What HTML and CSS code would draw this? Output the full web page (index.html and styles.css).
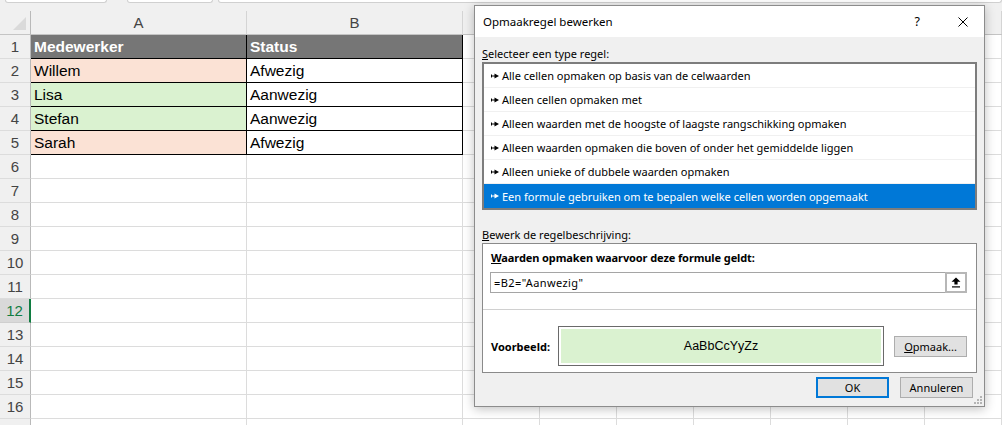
FILE: index.html
```html
<!DOCTYPE html>
<html lang="nl">
<head>
    <meta charset="UTF-8">
    <title>Opmaakregel bewerken</title>
    <link rel="stylesheet" href="styles.css">
</head>
<body>
    <div class="toolbar">
        <div class="tb-box name-box"></div>
        <div class="tb-box fx-box"></div>
        <div class="tb-box formula-box"></div>
    </div>

    <div class="sheet">
        <div class="row col-heads">
            <div class="rh corner"></div>
            <div class="ch">A</div>
            <div class="ch">B</div>
            <div class="rest"></div>
        </div>
        <div class="row">
            <div class="rh">1</div>
            <div class="c tb head">Medewerker</div>
            <div class="c tb head">Status</div>
            <div class="rest"></div>
        </div>
        <div class="row">
            <div class="rh">2</div>
            <div class="c tb peach">Willem</div>
            <div class="c tb">Afwezig</div>
            <div class="rest"></div>
        </div>
        <div class="row">
            <div class="rh">3</div>
            <div class="c tb green">Lisa</div>
            <div class="c tb">Aanwezig</div>
            <div class="rest"></div>
        </div>
        <div class="row">
            <div class="rh">4</div>
            <div class="c tb green">Stefan</div>
            <div class="c tb">Aanwezig</div>
            <div class="rest"></div>
        </div>
        <div class="row">
            <div class="rh">5</div>
            <div class="c tb peach">Sarah</div>
            <div class="c tb">Afwezig</div>
            <div class="rest"></div>
        </div>
        <div class="row"><div class="rh">6</div><div class="c"></div><div class="c"></div><div class="rest"></div></div>
        <div class="row"><div class="rh">7</div><div class="c"></div><div class="c"></div><div class="rest"></div></div>
        <div class="row"><div class="rh">8</div><div class="c"></div><div class="c"></div><div class="rest"></div></div>
        <div class="row"><div class="rh">9</div><div class="c"></div><div class="c"></div><div class="rest"></div></div>
        <div class="row"><div class="rh">10</div><div class="c"></div><div class="c"></div><div class="rest"></div></div>
        <div class="row"><div class="rh">11</div><div class="c"></div><div class="c"></div><div class="rest"></div></div>
        <div class="row"><div class="rh active">12</div><div class="c"></div><div class="c"></div><div class="rest"></div></div>
        <div class="row"><div class="rh">13</div><div class="c"></div><div class="c"></div><div class="rest"></div></div>
        <div class="row"><div class="rh">14</div><div class="c"></div><div class="c"></div><div class="rest"></div></div>
        <div class="row"><div class="rh">15</div><div class="c"></div><div class="c"></div><div class="rest"></div></div>
        <div class="row"><div class="rh">16</div><div class="c"></div><div class="c"></div><div class="rest"></div></div>
        <div class="row"><div class="rh"></div><div class="c"></div><div class="c"></div><div class="rest"></div></div>
    </div>

    <div class="dialog">
        <div class="dlg-title">
            <span class="dlg-name">Opmaakregel bewerken</span>
            <span class="help">?</span>
            <svg class="close" width="10" height="10" viewBox="0 0 10 10"><path d="M0.5 0.5L9.5 9.5M9.5 0.5L0.5 9.5" stroke="#000" stroke-width="1"/></svg>
        </div>

        <div class="dlg-body">
            <div class="lbl"><u>S</u>electeer een type regel:</div>
            <div class="rule-list">
                <div class="rule"><svg class="arr" width="8" height="6" viewBox="0 0 8 6"><path d="M0.5 1.5V4.5M0 3H4" stroke="currentColor"/><path d="M3.5 0.5L8 3L3.5 5.5Z" fill="currentColor"/></svg>Alle cellen opmaken op basis van de celwaarden</div>
                <div class="rule"><svg class="arr" width="8" height="6" viewBox="0 0 8 6"><path d="M0.5 1.5V4.5M0 3H4" stroke="currentColor"/><path d="M3.5 0.5L8 3L3.5 5.5Z" fill="currentColor"/></svg>Alleen cellen opmaken met</div>
                <div class="rule"><svg class="arr" width="8" height="6" viewBox="0 0 8 6"><path d="M0.5 1.5V4.5M0 3H4" stroke="currentColor"/><path d="M3.5 0.5L8 3L3.5 5.5Z" fill="currentColor"/></svg>Alleen waarden met de hoogste of laagste rangschikking opmaken</div>
                <div class="rule"><svg class="arr" width="8" height="6" viewBox="0 0 8 6"><path d="M0.5 1.5V4.5M0 3H4" stroke="currentColor"/><path d="M3.5 0.5L8 3L3.5 5.5Z" fill="currentColor"/></svg>Alleen waarden opmaken die boven of onder het gemiddelde liggen</div>
                <div class="rule"><svg class="arr" width="8" height="6" viewBox="0 0 8 6"><path d="M0.5 1.5V4.5M0 3H4" stroke="currentColor"/><path d="M3.5 0.5L8 3L3.5 5.5Z" fill="currentColor"/></svg>Alleen unieke of dubbele waarden opmaken</div>
                <div class="rule selected"><svg class="arr" width="8" height="6" viewBox="0 0 8 6"><path d="M0.5 1.5V4.5M0 3H4" stroke="currentColor"/><path d="M3.5 0.5L8 3L3.5 5.5Z" fill="currentColor"/></svg>Een formule gebruiken om te bepalen welke cellen worden opgemaakt</div>
            </div>

            <div class="lbl lbl-desc"><u>B</u>ewerk de regelbeschrijving:</div>
            <div class="desc">
                <div class="desc-title"><u>W</u>aarden opmaken waarvoor deze formule geldt:</div>
                <div class="formula">
                    <span class="formula-text">=B2="Aanwezig"</span>
                    <span class="pick">
                        <svg width="10" height="11" viewBox="0 0 10 11"><path d="M5 0.5L9.5 4.8H6.6V7.5H3.4V4.8H0.5Z" fill="#000"/><rect x="1" y="9.3" width="8" height="1.2" fill="#000"/></svg>
                    </span>
                </div>
                <div class="sep"></div>
                <div class="preview-row">
                    <span class="preview-lbl">Voorbeeld:</span>
                    <div class="preview"><div class="preview-fill">AaBbCcYyZz</div></div>
                    <button class="btn"><u>O</u>pmaak...</button>
                </div>
            </div>

            <div class="dlg-foot">
                <button class="btn default">OK</button>
                <button class="btn">Annuleren</button>
            </div>
        </div>

        <svg class="grip" width="8" height="8" viewBox="0 0 8 8">
            <rect x="6" y="0" width="2" height="2" fill="#b4b4b4"/>
            <rect x="3" y="3" width="2" height="2" fill="#b4b4b4"/>
            <rect x="6" y="3" width="2" height="2" fill="#b4b4b4"/>
            <rect x="0" y="6" width="2" height="2" fill="#b4b4b4"/>
            <rect x="3" y="6" width="2" height="2" fill="#b4b4b4"/>
            <rect x="6" y="6" width="2" height="2" fill="#b4b4b4"/>
        </svg>
    </div>
</body>
</html>
```

FILE: styles.css
```css
:root {
    --grid-line: #dcdcdc;
    --head-bg: #f0f0f0;
    --head-text: #444444;
    --excel-green: #107c41;
    --select-blue: #0078d7;
}

body, html {
    margin: 0;
    padding: 0;
    overflow: hidden;
    background-color: #ffffff;
    height: 100%;
}

body {
    position: relative;
    font-family: "Liberation Sans", Arial, sans-serif;
}

/* Toolbar remnants at the top */
.toolbar {
    display: flex;
    height: 11px;
    background-color: var(--head-bg);
    padding-left: 5px;
    box-sizing: border-box;
}

.tb-box {
    height: 3px;
    background-color: #ffffff;
    border: 1px solid #d0d0d0;
    border-top: none;
    border-radius: 0 0 4px 4px;
    box-sizing: border-box;
}

.name-box {
    width: 102px;
}

.fx-box {
    width: 86px;
    margin-left: 20px;
}

.formula-box {
    flex: 1;
    margin-left: 5px;
}

/* Sheet */
.sheet {
    display: flex;
    flex-direction: column;
}

.row {
    display: flex;
    height: 24px;
}

.rh {
    width: 31px;
    flex: none;
    box-sizing: border-box;
    background-color: var(--head-bg);
    border-right: 1px solid #b9b9b9;
    border-bottom: 1px solid var(--grid-line);
    color: var(--head-text);
    font-size: 15px;
    line-height: 23px;
    text-align: center;
}

.rh.active {
    background-color: #d9d9d9;
    color: var(--excel-green);
    border-right: 2px solid var(--excel-green);
    border-bottom-color: #cfcfcf;
}

.corner {
    position: relative;
    border-bottom: 1px solid #c4c4c4;
}

.corner::after {
    content: "";
    position: absolute;
    right: 4px;
    bottom: 4px;
    border-style: solid;
    border-width: 0 0 13px 13px;
    border-color: transparent transparent #dadada transparent;
}

.ch {
    width: 216px;
    flex: none;
    box-sizing: border-box;
    background-color: var(--head-bg);
    border-right: 1px solid #d4d4d4;
    border-bottom: 1px solid #c4c4c4;
    color: var(--head-text);
    font-size: 15px;
    line-height: 24px;
    text-align: center;
}

.col-heads .rest {
    background-color: var(--head-bg);
    border-bottom-color: #c4c4c4;
    background-image: repeating-linear-gradient(to right, transparent 0 76px, #d4d4d4 76px 77px);
}

.c {
    width: 216px;
    flex: none;
    box-sizing: border-box;
    border-right: 1px solid var(--grid-line);
    border-bottom: 1px solid var(--grid-line);
    padding-left: 3px;
    font-size: 15.5px;
    line-height: 23px;
    color: #000000;
    white-space: nowrap;
}

.rest {
    flex: 1;
    box-sizing: border-box;
    border-bottom: 1px solid var(--grid-line);
    background-image: repeating-linear-gradient(to right, transparent 0 76px, var(--grid-line) 76px 77px);
}

.c.tb {
    border-right-color: #000000;
    border-bottom-color: #000000;
}

.c.head {
    background-color: #767676;
    color: #ffffff;
    font-weight: bold;
}

.c.peach {
    background-color: #fbe2d5;
}

.c.green {
    background-color: #daf2d0;
}

/* Dialog */
.dialog {
    position: absolute;
    left: 474px;
    top: 5px;
    width: 511px;
    height: 402px;
    box-sizing: border-box;
    border: 1px solid #8c8c8c;
    background-color: #f0f0f0;
    box-shadow: 0 2px 10px rgba(0, 0, 0, 0.25);
    display: flex;
    flex-direction: column;
    font-family: "Segoe UI", "Noto Sans", sans-serif;
    font-size: 11px;
    color: #000000;
}

.dlg-title {
    height: 31px;
    flex: none;
    background-color: #ffffff;
    display: flex;
    align-items: center;
    padding-left: 8px;
    font-size: 11.5px;
}

.dlg-name {
    flex: 1;
}

.help {
    font-size: 12.5px;
    margin-right: 38px;
}

.close {
    margin-right: 16px;
}

.dlg-body {
    flex: 1;
    display: flex;
    flex-direction: column;
    padding: 0 7px;
}

.lbl {
    margin-top: 9px;
    line-height: 16px;
}

.lbl-desc {
    margin-top: 17px;
}

.rule-list {
    border: 2px solid #7d7d7d;
    background-color: #ffffff;
}

.rule {
    height: 24px;
    box-sizing: border-box;
    border-bottom: 1px solid #f0f0f0;
    display: flex;
    align-items: center;
    padding-left: 7px;
    white-space: nowrap;
}

.rule:last-child {
    border-bottom: none;
}

.rule.selected {
    background-color: var(--select-blue);
    color: #ffffff;
}

.arr {
    margin-right: 3px;
    flex: none;
}

.desc {
    border: 1px solid #8a8a8a;
    background-color: #ffffff;
    padding-bottom: 6px;
}

.desc-title {
    padding: 6px 8px 0;
    line-height: 16px;
    font-weight: bold;
    letter-spacing: -0.1px;
}

.formula {
    margin: 6px 9px 0 7px;
    height: 21px;
    box-sizing: border-box;
    border: 1px solid #a5a5a5;
    display: flex;
    align-items: center;
}

.formula-text {
    flex: 1;
    padding-left: 3px;
    letter-spacing: 0.4px;
}

.pick {
    width: 22px;
    height: 21px;
    margin: -1px -1px -1px 0;
    box-sizing: border-box;
    border: 2px solid #b7b7b7;
    background-color: #ffffff;
    display: flex;
    align-items: center;
    justify-content: center;
}

.sep {
    margin-top: 16px;
    border-top: 1px solid #d0d0d0;
}

.preview-row {
    display: flex;
    align-items: center;
    margin-top: 16px;
    padding-left: 8px;
}

.preview-lbl {
    width: 67px;
    font-weight: bold;
}

.preview {
    width: 326px;
    height: 40px;
    box-sizing: border-box;
    border: 1px solid #6a6a6a;
    padding: 2px;
}

.preview-fill {
    height: 100%;
    background-color: #daf2d0;
    display: flex;
    align-items: center;
    justify-content: center;
    font-family: "Liberation Sans", Arial, sans-serif;
    font-size: 12.5px;
}

.btn {
    width: 73px;
    height: 21px;
    box-sizing: border-box;
    border: 1px solid #adadad;
    background-color: #e1e1e1;
    font-family: inherit;
    font-size: 11px;
    color: #000000;
    padding: 0;
}

.preview-row .btn {
    margin-left: 10px;
}

.dlg-foot {
    display: flex;
    justify-content: flex-end;
    gap: 11px;
    margin-top: 4px;
    padding-right: 4px;
}

.btn.default {
    border: 2px solid var(--select-blue);
}

.grip {
    position: absolute;
    right: 2px;
    bottom: 2px;
}
```
